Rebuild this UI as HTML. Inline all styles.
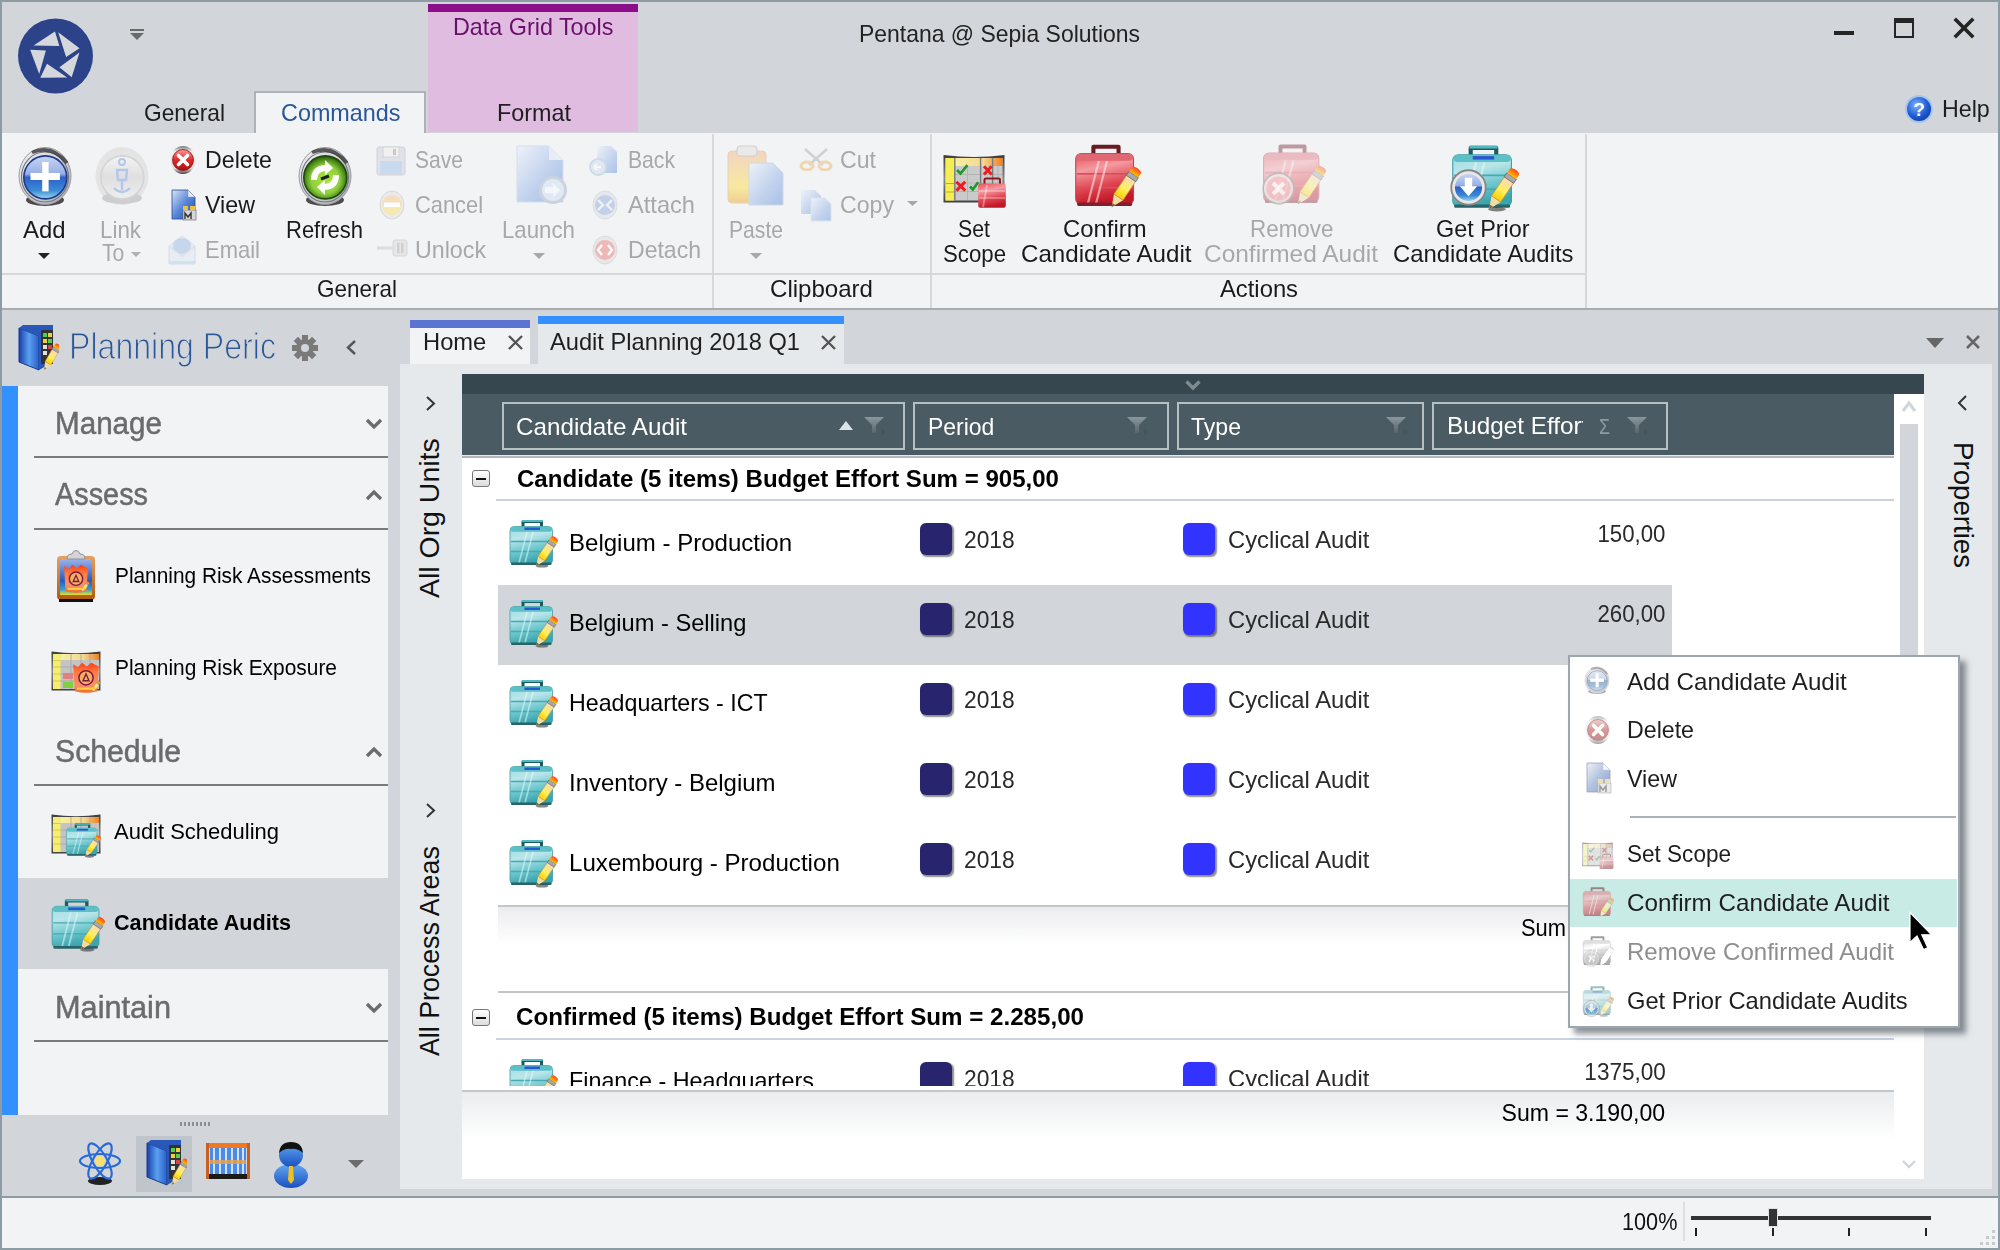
<!DOCTYPE html><html><head><meta charset="utf-8"><title>Pentana</title><style>
*{margin:0;padding:0;box-sizing:border-box}
html,body{width:2000px;height:1250px;overflow:hidden}
body{position:relative;background:#d2d6da;font-family:"Liberation Sans",sans-serif}
body>div,body>svg,.clip>div,.clip>svg{position:absolute}
.t{line-height:0;white-space:pre}
svg{overflow:visible}
.clip{overflow:hidden}
</style></head><body><svg style="left:0;top:0" width="0" height="0"><defs>
<linearGradient id="gTeal" x1="0" y1="0" x2="0.25" y2="1"><stop offset="0" stop-color="#9fdde2"/><stop offset="0.35" stop-color="#b9e6e9"/><stop offset="0.7" stop-color="#6cc5cc"/><stop offset="1" stop-color="#3aa5ad"/></linearGradient>
<linearGradient id="gRed" x1="0" y1="0" x2="0.25" y2="1"><stop offset="0" stop-color="#e8505a"/><stop offset="0.35" stop-color="#f49aa0"/><stop offset="0.7" stop-color="#e04450"/><stop offset="1" stop-color="#c01828"/></linearGradient>
<linearGradient id="gPen" x1="0" y1="1" x2="0" y2="0"><stop offset="0" stop-color="#ffd000"/><stop offset="0.45" stop-color="#fff060"/><stop offset="1" stop-color="#f8d8c0"/></linearGradient>
<linearGradient id="gEr" x1="0" y1="1" x2="0" y2="0"><stop offset="0" stop-color="#ffc000"/><stop offset="1" stop-color="#ff4020"/></linearGradient>
<linearGradient id="gBlueOrb" x1="0" y1="0" x2="0" y2="1"><stop offset="0" stop-color="#c6d4f2"/><stop offset="0.42" stop-color="#98b0e6"/><stop offset="0.5" stop-color="#2e5fc8"/><stop offset="0.8" stop-color="#3a8ad6"/><stop offset="1" stop-color="#9ad8ea"/></linearGradient>
<radialGradient id="gGreenOrb" cx="50%" cy="55%" r="55%"><stop offset="0" stop-color="#a8e830"/><stop offset="0.6" stop-color="#90d040"/><stop offset="0.85" stop-color="#4a8a18"/><stop offset="1" stop-color="#24500a"/></radialGradient>
<linearGradient id="gGrayOrb" x1="0" y1="0" x2="0" y2="1"><stop offset="0" stop-color="#f4f4f4"/><stop offset="0.5" stop-color="#dcdcdc"/><stop offset="1" stop-color="#eeeeee"/></linearGradient>
<linearGradient id="gSilver" x1="0" y1="0" x2="1" y2="1"><stop offset="0" stop-color="#f4f4f6"/><stop offset="0.5" stop-color="#d0d0d6"/><stop offset="1" stop-color="#a8a8b0"/></linearGradient>
<linearGradient id="gRing" x1="0" y1="0" x2="0" y2="1"><stop offset="0" stop-color="#7a7a7a"/><stop offset="0.2" stop-color="#f0f0f0"/><stop offset="0.8" stop-color="#e0e0e0"/><stop offset="1" stop-color="#404040"/></linearGradient>
<linearGradient id="gRedDisc" x1="0" y1="0" x2="0" y2="1"><stop offset="0" stop-color="#ff9a9a"/><stop offset="0.5" stop-color="#e02828"/><stop offset="1" stop-color="#b01010"/></linearGradient>
<linearGradient id="gDoc" x1="0" y1="0" x2="1" y2="1"><stop offset="0" stop-color="#d8e4f6"/><stop offset="0.5" stop-color="#5a88d8"/><stop offset="1" stop-color="#1a48b0"/></linearGradient>
<linearGradient id="gDocF" x1="0" y1="0" x2="1" y2="1"><stop offset="0" stop-color="#eef2fa"/><stop offset="0.6" stop-color="#b8ccec"/><stop offset="1" stop-color="#9cb8e4"/></linearGradient>
<linearGradient id="gClip" x1="0" y1="0" x2="0" y2="1"><stop offset="0" stop-color="#f4d0b8"/><stop offset="0.7" stop-color="#f8e890"/><stop offset="1" stop-color="#f0c880"/></linearGradient>
<linearGradient id="gOrange" x1="0" y1="0" x2="0" y2="1"><stop offset="0" stop-color="#ff5a20"/><stop offset="0.5" stop-color="#ff9050"/><stop offset="1" stop-color="#e04010"/></linearGradient>
<linearGradient id="gBook" x1="0" y1="0" x2="1" y2="0"><stop offset="0" stop-color="#1a3ea8"/><stop offset="0.5" stop-color="#5aa0f0"/><stop offset="1" stop-color="#2a60c8"/></linearGradient>
<linearGradient id="gPerson" x1="0" y1="0" x2="0" y2="1"><stop offset="0" stop-color="#60a8f0"/><stop offset="1" stop-color="#1a50c0"/></linearGradient>

<symbol id="pencil" viewBox="0 0 12 36"><g>
<polygon points="6,35 2,26 10,26" fill="#f4dca0"/><polygon points="6,35 4.7,32 7.3,32" fill="#806040"/>
<rect x="2" y="9" width="8" height="17" fill="url(#gPen)" stroke="#c89040" stroke-width="0.5"/>
<rect x="1.8" y="6" width="8.4" height="3.5" fill="#a8a8a8" stroke="#606060" stroke-width="0.5"/>
<path d="M2,6 L2,3 Q2,0.5 6,0.5 Q10,0.5 10,3 L10,6 Z" fill="url(#gEr)"/>
</g></symbol>

<symbol id="bcase" viewBox="0 0 50 50">
<path d="M13.5,10.5 V3.5 Q13.5,2 15,2 H33.5 Q35,2 35,3.5 V10.5 H32 V5 H16.5 V10.5 Z" fill="#1f5a5e"/>
<rect x="14" y="2" width="20.5" height="2" fill="#4fb8c0"/>
<rect x="2" y="8.5" width="42.5" height="37.5" rx="4" fill="url(#gTeal)" stroke="#3c9ea5" stroke-width="0.8"/>
<rect x="2.5" y="8.7" width="41.5" height="5" rx="2.5" fill="#5cc0c6"/>
<rect x="16.5" y="9.5" width="15.5" height="2.5" fill="#2a58d0"/>
<path d="M3,23.5 H44 M3,33.5 H44" stroke="#45aab2" stroke-width="1.3"/>
<path d="M19,14 L11,45 M25,14 L17,45" stroke="#e8f8f8" stroke-width="1.6" opacity="0.55"/>
<rect x="3" y="44.5" width="40.5" height="2.5" rx="1" fill="#2a6468"/>
<ellipse cx="34" cy="48" rx="6.5" ry="1.6" fill="#333" opacity="0.6"/>
<use href="#pencil" x="0" y="0" width="12" height="36" transform="translate(28.4,48) rotate(34) translate(-6,-35)"/>
</symbol>

<symbol id="bcaseRed" viewBox="0 0 50 50">
<path d="M13.5,10.5 V3.5 Q13.5,2 15,2 H33.5 Q35,2 35,3.5 V10.5 H32 V5 H16.5 V10.5 Z" fill="#6a1a20"/>
<rect x="2" y="8.5" width="42.5" height="37.5" rx="4" fill="url(#gRed)" stroke="#c04450" stroke-width="0.8"/>
<rect x="2.5" y="8.7" width="41.5" height="5" rx="2.5" fill="#e06872"/>
<path d="M3,23.5 H44 M3,33.5 H44" stroke="#d85060" stroke-width="1.3"/>
<path d="M19,14 L11,45 M25,14 L17,45" stroke="#fff0f0" stroke-width="1.6" opacity="0.55"/>
<rect x="3" y="44.5" width="40.5" height="2.5" rx="1" fill="#802028"/>
<use href="#pencil" x="0" y="0" width="12" height="36" transform="translate(28.4,48) rotate(34) translate(-6,-35)"/>
</symbol>

<symbol id="orbBase" viewBox="0 0 60 64">
<ellipse cx="30" cy="56" rx="19" ry="6" fill="#3a3a3a" opacity="0.9"/>
<ellipse cx="30" cy="32" rx="26" ry="28.5" fill="url(#gSilver)" stroke="#9a9aa2" stroke-width="1"/>
<ellipse cx="30" cy="33" rx="23.5" ry="25" fill="none" stroke="#77777f" stroke-width="1.2"/>
<path d="M17,8.5 Q37,0 52,19" stroke="#2a2a2a" stroke-width="3.5" fill="none" opacity="0.75"/>
</symbol>
<symbol id="orbAdd" viewBox="0 0 60 64">
<use href="#orbBase" width="60" height="64"/>
<circle cx="30.3" cy="33.4" r="21.5" fill="url(#gBlueOrb)" stroke="#1c3a88" stroke-width="1.6"/>
<rect x="27.2" y="18" width="6.4" height="29.4" fill="#fff"/><rect x="15.5" y="29" width="29.4" height="7" fill="#fff"/>
</symbol>
<symbol id="orbRefresh" viewBox="0 0 60 64">
<use href="#orbBase" width="60" height="64"/>
<circle cx="30.3" cy="33.4" r="21.5" fill="url(#gGreenOrb)" stroke="#1e4a08" stroke-width="1.6"/>
<path d="M16,36 Q16,22 30,21 L30,16 L38,24 L30,31 L30,27 Q22,28 22,36 Z" fill="#fff"/>
<path d="M44,31 Q44,45 30,46 L30,51 L22,43 L30,36 L30,40 Q38,39 38,31 Z" fill="#fff"/>
<path d="M26,35 L34,32" stroke="#222" stroke-width="3"/>
</symbol>
<symbol id="orbLink" viewBox="0 0 60 64">
<ellipse cx="30" cy="32" rx="26.5" ry="29" fill="#e2e2e2"/>
<ellipse cx="30" cy="54" rx="20" ry="6" fill="#c8c8c8"/>
<circle cx="30.3" cy="33.4" r="21.5" fill="url(#gGrayOrb)" stroke="#cfcfcf" stroke-width="1.6"/>
<circle cx="30" cy="18" r="3" fill="none" stroke="#a8c0e8" stroke-width="2"/>
<path d="M25,26 H35 L34,36 H26 Z M30,36 V46 M22,44 Q30,52 38,44" stroke="#a8c0e8" stroke-width="2.4" fill="none"/>
</symbol>

<symbol id="del" viewBox="0 0 26 30">
<ellipse cx="13" cy="15" rx="12.5" ry="14" fill="url(#gRing)"/>
<circle cx="13" cy="15" r="10.5" fill="url(#gRedDisc)" stroke="#8a1010" stroke-width="0.8"/>
<path d="M8.5,10.5 L17.5,19.5 M17.5,10.5 L8.5,19.5" stroke="#fff" stroke-width="3.6" stroke-linecap="round"/>
</symbol>
<symbol id="view" viewBox="0 0 28 32">
<path d="M2,1 H18 L25,8 V30 H2 Z" fill="url(#gDoc)" stroke="#2a4a98" stroke-width="0.8"/>
<path d="M18,1 V8 H25" fill="#e8eef8" stroke="#8aa0c8" stroke-width="0.6"/>
<rect x="13" y="21" width="13" height="10" fill="#d8d8d8" stroke="#606060" stroke-width="0.6"/>
<rect x="13" y="17" width="5" height="4" fill="#f0c040"/><rect x="20" y="17" width="5" height="4" fill="#f0c040"/>
<path d="M15,30 V24 L18,28 L21,24 V30" stroke="#333" stroke-width="1.4" fill="none"/>
</symbol>
<symbol id="email" viewBox="0 0 30 32">
<path d="M2,12 L15,2 L28,12 V30 H2 Z" fill="#e6ecf4" stroke="#d0d8e4" stroke-width="1"/>
<ellipse cx="15" cy="12" rx="9" ry="8" fill="#bcd0ec"/>
<path d="M2,12 L15,22 L28,12" stroke="#d4dce8" stroke-width="1.5" fill="none"/>
<rect x="2" y="27" width="26" height="3" fill="#c4e0f0"/>
</symbol>
<symbol id="save" viewBox="0 0 32 32">
<rect x="2" y="2" width="28" height="28" rx="2" fill="#d8dce4" stroke="#c0c4cc"/>
<rect x="8" y="2" width="16" height="10" fill="#f0f0f0" stroke="#c8c8c8"/><rect x="18" y="4" width="3" height="6" fill="#b8b8b8"/>
<rect x="5" y="16" width="22" height="13" fill="#b8d0ee"/>
</symbol>
<symbol id="cancel" viewBox="0 0 28 32">
<ellipse cx="14" cy="16" rx="12" ry="14" fill="#e8e8e8" stroke="#d0d0d0"/>
<circle cx="14" cy="16" r="10" fill="#f8d8b0"/><path d="M4,16 A10,10 0 0 0 24,16 Z" fill="#f8e8a0"/>
<rect x="6" y="13.5" width="16" height="4.5" fill="#fff"/>
</symbol>
<symbol id="unlock" viewBox="0 0 34 22">
<path d="M2,11 H18" stroke="#d8d8d8" stroke-width="3"/><rect x="18" y="3" width="14" height="16" rx="2" fill="#e4e4e4" stroke="#d0d0d0"/>
<rect x="22" y="6" width="2.5" height="10" fill="#c8c8c8"/><rect x="26" y="6" width="2.5" height="10" fill="#c8c8c8"/>
</symbol>
<symbol id="launch" viewBox="0 0 52 62">
<path d="M2,2 H34 L48,16 V58 H2 Z" fill="url(#gDocF)" stroke="#d0dcec" stroke-width="1"/>
<path d="M34,2 V16 H48" fill="#e8ecf4"/>
<circle cx="38" cy="46" r="12.5" fill="#dfe8f4" stroke="#c8d0dc" stroke-width="3"/>
<path d="M30,43 H38 V39 L45,46 L38,53 V49 H30 Z" fill="#f4f8fc"/>
</symbol>
<symbol id="back" viewBox="0 0 30 32">
<path d="M8,1 H22 L28,7 V28 H8 Z" fill="url(#gDocF)"/>
<circle cx="9" cy="22" r="8" fill="#dce6f4" stroke="#c8d4e4" stroke-width="2"/>
<path d="M5,22 H12 M5,22 L8,19 M5,22 L8,25" stroke="#f8fafc" stroke-width="2"/>
</symbol>
<symbol id="attach" viewBox="0 0 28 32">
<ellipse cx="14" cy="16" rx="12" ry="14" fill="#e4e6ea" stroke="#d4d6da"/>
<circle cx="14" cy="16" r="10" fill="#b8c8e8"/>
<path d="M7,11 L12,16 L7,21 M21,11 L16,16 L21,21" stroke="#eef2f8" stroke-width="2.4" fill="none"/>
</symbol>
<symbol id="detach" viewBox="0 0 28 32">
<ellipse cx="14" cy="16" rx="12" ry="14" fill="#e6e4e4" stroke="#d8d4d4"/>
<circle cx="14" cy="16" r="10" fill="#eeaaaa"/>
<path d="M11,11 L7,16 L11,21 M17,11 L21,16 L17,21" stroke="#fff" stroke-width="2.4" fill="none"/>
</symbol>
<symbol id="paste" viewBox="0 0 60 64">
<rect x="3" y="8" width="38" height="52" rx="4" fill="url(#gClip)" stroke="#e8c8b0"/>
<rect x="12" y="3" width="20" height="10" rx="3" fill="#e8e8e8" stroke="#c8c8c8"/>
<path d="M24,20 H48 L58,30 V62 H24 Z" fill="url(#gDocF)" stroke="#c8d4e8"/>
</symbol>
<symbol id="cut" viewBox="0 0 34 24">
<path d="M6,2 L24,18 M28,2 L10,18" stroke="#c8c8c8" stroke-width="2.5"/>
<ellipse cx="8" cy="19" rx="6" ry="4" fill="none" stroke="#eed0a0" stroke-width="3"/>
<ellipse cx="26" cy="19" rx="6" ry="4" fill="none" stroke="#eed0a0" stroke-width="3"/>
</symbol>
<symbol id="copy" viewBox="0 0 34 34">
<path d="M2,2 H16 L22,8 V26 H2 Z" fill="url(#gDocF)"/>
<path d="M12,10 H26 L32,16 V33 H12 Z" fill="url(#gDocF)" stroke="#d8e0ec"/>
</symbol>
<symbol id="scope" viewBox="0 0 64 56">
<linearGradient id="gFrame" x1="0" y1="0" x2="0" y2="1"><stop offset="0" stop-color="#3c3c3c"/><stop offset="0.5" stop-color="#8a8a8a"/><stop offset="1" stop-color="#404040"/></linearGradient>
<linearGradient id="gHdr" x1="0" y1="0" x2="1" y2="0"><stop offset="0" stop-color="#f8f0a0"/><stop offset="0.6" stop-color="#f4d890"/><stop offset="1" stop-color="#f08020"/></linearGradient>
<path d="M0.5,3 Q31,7 61.5,3 V50.5 H0.5 Z" fill="url(#gFrame)"/>
<rect x="2.5" y="6" width="57" height="42.5" fill="#cacaca"/>
<rect x="2.5" y="6" width="8.5" height="42.5" fill="#f4ee50"/>
<rect x="11" y="6" width="48.5" height="8" fill="url(#gHdr)"/>
<path d="M24.5,14 V48 M11,22.5 H59 M11,31 H59 M11,39.5 H59 M55,14 V48" stroke="#b4b4b4" stroke-width="1"/>
<path d="M11.8,6 V48 M37.6,6 V48 M49.6,6 V48" stroke="#7a7a7a" stroke-width="1.4"/>
<path d="M3,31.5 H11 M3,40 H11" stroke="#b8b020" stroke-width="1"/>
<path d="M14,18 L17.5,21.5 L24.4,13.2" stroke="#1a9a2a" stroke-width="2.6" fill="none"/>
<path d="M27,34.5 L29.8,37.5 L35.2,30.2" stroke="#1a9a2a" stroke-width="2.6" fill="none"/>
<path d="M41,14.2 L48.6,22.4 M48.6,14.2 L41,22.4" stroke="#ee1c1c" stroke-width="3"/>
<path d="M13.4,29.8 L22.2,38.6 M22.2,29.8 L13.4,38.6" stroke="#ee1c1c" stroke-width="3"/>
<path d="M41.5,32.5 V27.5 Q41.5,26.4 43,26.4 H55.5 Q57,26.4 57,27.5 V32.5" stroke="#901820" stroke-width="2" fill="none"/>
<rect x="35.2" y="31.5" width="27.6" height="24.3" rx="2" fill="url(#gRed)"/>
<path d="M36,39 H62 M36,46 H62" stroke="#fff" stroke-width="1.2" opacity="0.55"/>
<path d="M44,33 L40,55" stroke="#fff" stroke-width="2" opacity="0.35"/>
</symbol>
<symbol id="downOrb" viewBox="0 0 30 30">
<circle cx="15" cy="15" r="14" fill="#e8e8e8" stroke="#888" stroke-width="1.5"/>
<circle cx="15" cy="15" r="11" fill="url(#gBlueOrb)"/>
<path d="M12,7 H18 V14 H22 L15,22 L8,14 H12 Z" fill="#fff"/>
</symbol>
<symbol id="xOrb" viewBox="0 0 30 30">
<circle cx="15" cy="15" r="14" fill="#eee" stroke="#bbb" stroke-width="1.5"/>
<circle cx="15" cy="15" r="11" fill="#f4c8cc"/>
<path d="M10,10 L20,20 M20,10 L10,20" stroke="#fff" stroke-width="3.6"/>
</symbol>
<symbol id="book" viewBox="0 0 42 48">
<path d="M2,4 L22,12 L22,46 L2,38 Z" fill="url(#gBook)" stroke="#163a90" stroke-width="1"/>
<path d="M2,4 L6,1 H36 L36,38 L22,46 L22,12 Z" fill="#2a58b8"/>
<rect x="24" y="6" width="12" height="34" fill="#333"/>
<rect x="26" y="9" width="4" height="4" fill="#50d050"/><rect x="31" y="9" width="4" height="4" fill="#f0d040"/>
<rect x="26" y="15" width="4" height="4" fill="#f0d040"/><rect x="31" y="15" width="4" height="4" fill="#50d050"/>
<rect x="26" y="21" width="4" height="4" fill="#e0e0e0"/><rect x="31" y="21" width="4" height="4" fill="#e04040"/>
<rect x="26" y="27" width="4" height="4" fill="#e0e0e0"/>
<use href="#pencil" width="12" height="36" transform="translate(27,46) rotate(30) translate(-5,-30) scale(0.85)"/>
</symbol>
<symbol id="bagOrange" viewBox="0 0 40 44">
<linearGradient id="gBag" x1="0" y1="0" x2="0" y2="1"><stop offset="0" stop-color="#ff3a10"/><stop offset="0.3" stop-color="#ff7a40"/><stop offset="0.75" stop-color="#f8906a"/><stop offset="1" stop-color="#f06a20"/></linearGradient>
<path d="M3,5 L9,9 L15,3 L21,8 L27,3 L37,8 L35,41 Q20,45 5,41 Z" fill="url(#gBag)"/>
<circle cx="20" cy="23" r="9.5" fill="#f4b060" stroke="#7a1a40" stroke-width="2"/>
<path d="M16,27 L20,18 L24,27 Z" fill="none" stroke="#7a1a40" stroke-width="1.8"/>
<rect x="8" y="36" width="24" height="3" fill="#ffe040" opacity="0.8"/>
<use href="#pencil" width="12" height="36" transform="translate(28,42) rotate(35) translate(-3,-18) scale(0.5)"/>
</symbol>
<symbol id="pra" viewBox="0 0 40 52">
<linearGradient id="gClipB" x1="0" y1="0" x2="0" y2="1"><stop offset="0" stop-color="#e8a060"/><stop offset="1" stop-color="#b05a10"/></linearGradient>
<linearGradient id="gPaper" x1="0" y1="0" x2="0" y2="1"><stop offset="0" stop-color="#9ab4e8"/><stop offset="0.6" stop-color="#2a58c0"/><stop offset="0.85" stop-color="#30a0e0"/><stop offset="1" stop-color="#f0e020"/></linearGradient>
<rect x="1" y="6" width="38" height="44" rx="4" fill="url(#gClipB)"/>
<rect x="4" y="9" width="32" height="36" rx="1" fill="url(#gPaper)"/>
<path d="M11,9 Q11,4 16,4 Q17,0.5 20,0.5 Q23,0.5 24,4 Q29,4 29,9 Z" fill="#d4d4d8" stroke="#909098" stroke-width="1"/>
<use href="#bagOrange" x="6" y="12" width="28" height="32"/>
<rect x="3" y="49" width="34" height="3" fill="#111"/>
</symbol>
<symbol id="gridIcon" viewBox="0 0 50 46">
<path d="M0.5,2.5 Q25,6 49.5,2.5 V41.5 H0.5 Z" fill="url(#gFrame)"/>
<rect x="2" y="5" width="46" height="35" fill="#c4c4c4"/>
<rect x="2" y="5" width="7.5" height="35" fill="#f6ee70"/>
<rect x="9.5" y="5" width="38.5" height="6" fill="url(#gHdr)"/>
<path d="M9.5,18 H48 M9.5,25 H48 M9.5,32 H48 M20,5 V40 M30,5 V40 M39,5 V40" stroke="#a8a8a8" stroke-width="0.9"/>
<path d="M2,11.5 H9.5 M2,18 H9.5 M2,25 H9.5 M2,32 H9.5" stroke="#d0c840" stroke-width="0.9"/>
</symbol>
<symbol id="pre" viewBox="0 0 50 46">
<use href="#gridIcon" width="50" height="46"/>
<rect x="12" y="24" width="10" height="6" fill="#e08080"/><rect x="12" y="33" width="10" height="6" fill="#80d040"/>
<use href="#bagOrange" x="20" y="10" width="30" height="36"/>
</symbol>
<symbol id="asched" viewBox="0 0 50 46">
<use href="#gridIcon" width="50" height="46"/>
<use href="#bcase" x="14" y="10" width="36" height="36"/>
</symbol>
<symbol id="atom" viewBox="0 0 44 46">
<ellipse cx="22" cy="40" rx="12" ry="4" fill="#222"/>
<g fill="none" stroke="#2a6ad8" stroke-width="2.2"><ellipse cx="22" cy="20" rx="20" ry="7"/><ellipse cx="22" cy="20" rx="20" ry="7" transform="rotate(60 22 20)"/><ellipse cx="22" cy="20" rx="20" ry="7" transform="rotate(120 22 20)"/></g>
<circle cx="22" cy="20" r="5" fill="#f8e070"/>
</symbol>
<symbol id="abacus" viewBox="0 0 46 40">
<rect x="1" y="2" width="44" height="5" fill="#f07820"/><rect x="1" y="33" width="44" height="5" fill="#1a1a1a"/>
<rect x="1" y="2" width="3" height="36" fill="#c86020"/><rect x="42" y="2" width="3" height="36" fill="#c86020"/>
<rect x="5" y="7" width="36" height="26" fill="#4a8ae8"/>
<path d="M9,7 V33 M15,7 V33 M21,7 V33 M27,7 V33 M33,7 V33 M38,7 V33" stroke="#fff" stroke-width="1.5"/>
<rect x="5" y="19" width="36" height="4" fill="#f0a040" opacity="0.8"/>
</symbol>
<symbol id="person" viewBox="0 0 38 48">
<ellipse cx="19" cy="36" rx="17" ry="12" fill="url(#gPerson)"/>
<circle cx="19" cy="15" r="12" fill="url(#gPerson)"/>
<path d="M7,13 Q8,2 19,2 Q30,2 31,13 Q25,8 19,9 Q13,8 7,13 Z" fill="#111"/>
<path d="M17,26 H21 L22,40 L19,44 L16,40 Z" fill="#f0c020"/>
</symbol>
</defs></svg>
<svg style="left:18px;top:18px;" width="75" height="76" viewBox="0 0 75 76"><circle cx="37.5" cy="38" r="37.5" fill="#2c4389"/><polygon points="15.6,27.4 36.9,13.4 41.4,27.9" fill="#d4d8dc"/><polygon points="40.2,14.2 61.5,30.2 48.1,39.1" fill="#d4d8dc"/><polygon points="61.5,34.6 53.7,59.3 41.4,49.2" fill="#d4d8dc"/><polygon points="22.3,59.8 29.0,45.8 49.2,59.6" fill="#d4d8dc"/><polygon points="12.2,31.8 27.9,32.4 21.2,55.9" fill="#d4d8dc"/></svg>
<div style="left:130px;top:29px;width:14px;height:2px;background:#6a6a6a"></div>
<svg style="left:130px;top:33px;" width="14" height="8" viewBox="0 0 14 8"><polygon points="0,0 14,0 7,7" fill="#6a6a6a"/></svg>
<div style="left:428px;top:4px;width:210px;height:128px;background:#e0bde0"></div>
<div style="left:428px;top:4px;width:210px;height:8px;background:#8b0f8b"></div>
<div class="t" style="left:452.6px;top:26.7px;font-size:24px;color:#6b0e6b;transform:scaleX(0.9723);transform-origin:left center;">Data Grid Tools</div>
<div class="t" style="left:859.2px;top:34.4px;font-size:24px;color:#222;transform:scaleX(0.9561);transform-origin:left center;">Pentana @ Sepia Solutions</div>
<div class="t" style="left:144px;top:112.7px;font-size:24px;color:#1e1e1e;transform:scaleX(0.9486);transform-origin:left center;">General</div>
<div style="left:254px;top:91px;width:172px;height:43px;background:#f2f3f5;border:2px solid #aeb2b6;border-bottom:none"></div>
<div class="t" style="left:280.5px;top:112.7px;font-size:24px;color:#2a5699;transform:scaleX(0.9738);transform-origin:left center;">Commands</div>
<div class="t" style="left:497px;top:112.7px;font-size:24px;color:#1e1e1e;transform:scaleX(0.9735);transform-origin:left center;">Format</div>
<div style="left:1834px;top:31px;width:20px;height:4px;background:#252525"></div>
<div style="left:1894px;top:18px;width:20px;height:20px;border:2px solid #252525;border-top:5px solid #252525"></div>
<svg style="left:1954px;top:18px;" width="20" height="20" viewBox="0 0 20 20"><path d="M2,2 L18,18 M18,2 L2,18" stroke="#252525" stroke-width="3.6" stroke-linecap="square"/></svg>
<svg style="left:1905px;top:95px;" width="28" height="28" viewBox="0 0 28 28"><defs><radialGradient id="hg" cx="40%" cy="35%" r="70%"><stop offset="0" stop-color="#7fb2ff"/><stop offset="0.6" stop-color="#1f5fd6"/><stop offset="1" stop-color="#0b3aa0"/></radialGradient></defs><circle cx="14" cy="14" r="13" fill="url(#hg)" stroke="#a9c4ea" stroke-width="2"/><text x="14" y="21" font-family="Liberation Sans" font-weight="700" font-size="19" fill="#fff" text-anchor="middle">?</text></svg>
<div class="t" style="left:1942px;top:108.7px;font-size:24px;color:#1e1e1e;transform:scaleX(0.9684);transform-origin:left center;">Help</div>
<div style="left:2px;top:133px;width:1996px;height:176px;background:#f2f3f5"></div>
<div style="left:2px;top:308px;width:1996px;height:2px;background:#a9acaf"></div>
<div style="left:2px;top:273px;width:1583px;height:2px;background:#d5d9dc"></div>
<div style="left:712px;top:134px;width:2px;height:174px;background:#d5d9dc"></div>
<div style="left:930px;top:134px;width:2px;height:174px;background:#d5d9dc"></div>
<div style="left:1585px;top:134px;width:2px;height:174px;background:#d5d9dc"></div>
<div class="t" style="left:22.5px;top:229.7px;font-size:24px;color:#1a1a1a;transform:scaleX(0.9952);transform-origin:left center;">Add</div>
<svg style="left:38px;top:253px;" width="12" height="6" viewBox="0 0 12 6"><polygon points="0,0 12,0 6.0,6" fill="#222"/></svg>
<div class="t" style="left:100px;top:229.7px;font-size:24px;color:#a8a8a8;transform:scaleX(0.9312);transform-origin:left center;">Link</div>
<div class="t" style="left:101.7px;top:253.2px;font-size:24px;color:#a8a8a8;transform:scaleX(0.8794);transform-origin:left center;">To</div>
<svg style="left:131px;top:252px;" width="10" height="5" viewBox="0 0 10 5"><polygon points="0,0 10,0 5.0,5" fill="#b0b0b0"/></svg>
<div class="t" style="left:205px;top:159.7px;font-size:24px;color:#1a1a1a;transform:scaleX(0.9658);transform-origin:left center;">Delete</div>
<div class="t" style="left:205px;top:204.7px;font-size:24px;color:#1a1a1a;transform:scaleX(0.9691);transform-origin:left center;">View</div>
<div class="t" style="left:205px;top:249.7px;font-size:24px;color:#a8a8a8;transform:scaleX(0.9164);transform-origin:left center;">Email</div>
<div class="t" style="left:286px;top:229.7px;font-size:24px;color:#1a1a1a;transform:scaleX(0.9162);transform-origin:left center;">Refresh</div>
<div class="t" style="left:415px;top:159.7px;font-size:24px;color:#a8a8a8;transform:scaleX(0.8775);transform-origin:left center;">Save</div>
<div class="t" style="left:415px;top:204.7px;font-size:24px;color:#a8a8a8;transform:scaleX(0.9101);transform-origin:left center;">Cancel</div>
<div class="t" style="left:415px;top:249.7px;font-size:24px;color:#a8a8a8;transform:scaleX(0.9678);transform-origin:left center;">Unlock</div>
<div class="t" style="left:502px;top:229.7px;font-size:24px;color:#a8a8a8;transform:scaleX(0.9270);transform-origin:left center;">Launch</div>
<svg style="left:533px;top:253px;" width="12" height="6" viewBox="0 0 12 6"><polygon points="0,0 12,0 6.0,6" fill="#a8a8a8"/></svg>
<div class="t" style="left:628px;top:159.7px;font-size:24px;color:#a8a8a8;transform:scaleX(0.8808);transform-origin:left center;">Back</div>
<div class="t" style="left:628px;top:204.7px;font-size:24px;color:#a8a8a8;transform:scaleX(0.9846);transform-origin:left center;">Attach</div>
<div class="t" style="left:628px;top:249.7px;font-size:24px;color:#a8a8a8;transform:scaleX(0.9599);transform-origin:left center;">Detach</div>
<div class="t" style="left:729px;top:229.7px;font-size:24px;color:#a8a8a8;transform:scaleX(0.8798);transform-origin:left center;">Paste</div>
<svg style="left:750px;top:253px;" width="12" height="6" viewBox="0 0 12 6"><polygon points="0,0 12,0 6.0,6" fill="#a8a8a8"/></svg>
<div class="t" style="left:840px;top:159.7px;font-size:24px;color:#a8a8a8;transform:scaleX(0.9636);transform-origin:left center;">Cut</div>
<div class="t" style="left:840px;top:204.7px;font-size:24px;color:#a8a8a8;transform:scaleX(0.9637);transform-origin:left center;">Copy</div>
<svg style="left:907px;top:201px;" width="11" height="5" viewBox="0 0 11 5"><polygon points="0,0 11,0 5.5,5" fill="#a8a8a8"/></svg>
<div class="t" style="left:958px;top:228.7px;font-size:24px;color:#1a1a1a;transform:scaleX(0.8881);transform-origin:left center;">Set</div>
<div class="t" style="left:943px;top:253.7px;font-size:24px;color:#1a1a1a;transform:scaleX(0.9256);transform-origin:left center;">Scope</div>
<div class="t" style="left:1063px;top:228.7px;font-size:24px;color:#1a1a1a;transform:scaleX(0.9939);transform-origin:left center;">Confirm</div>
<div class="t" style="left:1020.5px;top:253.7px;font-size:24px;color:#1a1a1a;transform:scaleX(1.0061);transform-origin:left center;">Candidate Audit</div>
<div class="t" style="left:1250px;top:228.7px;font-size:24px;color:#a8a8a8;transform:scaleX(0.9343);transform-origin:left center;">Remove</div>
<div class="t" style="left:1204px;top:253.7px;font-size:24px;color:#a8a8a8;transform:scaleX(1.0189);transform-origin:left center;">Confirmed Audit</div>
<div class="t" style="left:1436px;top:228.7px;font-size:24px;color:#1a1a1a;transform:scaleX(0.9747);transform-origin:left center;">Get Prior</div>
<div class="t" style="left:1392.5px;top:253.7px;font-size:24px;color:#1a1a1a;transform:scaleX(0.9947);transform-origin:left center;">Candidate Audits</div>
<div class="t" style="left:316.8px;top:288.7px;font-size:24px;color:#1a1a1a;transform:scaleX(0.9369);transform-origin:left center;">General</div>
<div class="t" style="left:770px;top:288.7px;font-size:24px;color:#1a1a1a;transform:scaleX(1.0026);transform-origin:left center;">Clipboard</div>
<div class="t" style="left:1220px;top:288.7px;font-size:24px;color:#1a1a1a;transform:scaleX(0.9911);transform-origin:left center;">Actions</div>
<div class="t" style="left:69px;top:347.1px;font-size:36px;color:#2b579a;transform:scaleX(0.8917);transform-origin:left center;-webkit-text-stroke:1.1px #d2d6da;">Planning Peric</div>
<svg style="left:292px;top:335px;" width="26" height="26" viewBox="0 0 26 26"><g transform="translate(13,13)" fill="#7a7a7a"><rect x="-3" y="-13" width="6" height="7" transform="rotate(0)"/><rect x="-3" y="-13" width="6" height="7" transform="rotate(45)"/><rect x="-3" y="-13" width="6" height="7" transform="rotate(90)"/><rect x="-3" y="-13" width="6" height="7" transform="rotate(135)"/><rect x="-3" y="-13" width="6" height="7" transform="rotate(180)"/><rect x="-3" y="-13" width="6" height="7" transform="rotate(225)"/><rect x="-3" y="-13" width="6" height="7" transform="rotate(270)"/><rect x="-3" y="-13" width="6" height="7" transform="rotate(315)"/><circle r="9"/><circle r="4" fill="#d2d6da"/></g></svg>
<svg style="left:345px;top:340px;" width="12" height="15" viewBox="0 0 12 15"><path d="M10,1 L3,7.5 L10,14" stroke="#555" stroke-width="2.4" fill="none"/></svg>
<div style="left:2px;top:386px;width:16px;height:729px;background:#3390ff"></div>
<div style="left:18px;top:386px;width:370px;height:729px;background:#f2f3f5"></div>
<div class="t" style="left:55px;top:424.3px;font-size:31px;color:#6b6b6b;transform:scaleX(0.9551);transform-origin:left center;-webkit-text-stroke:0.5px #6b6b6b;">Manage</div>
<svg style="left:366px;top:419px;" width="16" height="10" viewBox="0 0 16 10"><path d="M1,1 L8,8 L15,1" stroke="#6b6b6b" stroke-width="3.2" fill="none"/></svg>
<div style="left:34px;top:456px;width:354px;height:2px;background:#7a7a7a"></div>
<div class="t" style="left:55px;top:495.3px;font-size:31px;color:#6b6b6b;transform:scaleX(0.9307);transform-origin:left center;-webkit-text-stroke:0.5px #6b6b6b;">Assess</div>
<svg style="left:366px;top:490px;" width="16" height="10" viewBox="0 0 16 10"><path d="M1,9 L8,2 L15,9" stroke="#6b6b6b" stroke-width="3.2" fill="none"/></svg>
<div style="left:34px;top:528px;width:354px;height:2px;background:#7a7a7a"></div>
<div class="t" style="left:115px;top:576.4px;font-size:22px;color:#000;transform:scaleX(0.9473);transform-origin:left center;">Planning Risk Assessments</div>
<div class="t" style="left:115px;top:668.4px;font-size:22px;color:#000;transform:scaleX(0.9504);transform-origin:left center;">Planning Risk Exposure</div>
<div class="t" style="left:55px;top:752.3px;font-size:31px;color:#6b6b6b;transform:scaleX(0.9746);transform-origin:left center;-webkit-text-stroke:0.5px #6b6b6b;">Schedule</div>
<svg style="left:366px;top:747px;" width="16" height="10" viewBox="0 0 16 10"><path d="M1,9 L8,2 L15,9" stroke="#6b6b6b" stroke-width="3.2" fill="none"/></svg>
<div style="left:34px;top:784px;width:354px;height:2px;background:#7a7a7a"></div>
<div class="t" style="left:114px;top:831.7px;font-size:22px;color:#000;transform:scaleX(0.9992);transform-origin:left center;">Audit Scheduling</div>
<div style="left:18px;top:878px;width:370px;height:91px;background:#d2d6da"></div>
<div class="t" style="left:114px;top:923.4px;font-size:22px;color:#000;font-weight:700;transform:scaleX(0.9828);transform-origin:left center;">Candidate Audits</div>
<div class="t" style="left:55px;top:1007.8px;font-size:31px;color:#6b6b6b;transform:scaleX(0.9899);transform-origin:left center;-webkit-text-stroke:0.5px #6b6b6b;">Maintain</div>
<svg style="left:366px;top:1003px;" width="16" height="10" viewBox="0 0 16 10"><path d="M1,1 L8,8 L15,1" stroke="#6b6b6b" stroke-width="3.2" fill="none"/></svg>
<div style="left:34px;top:1040px;width:354px;height:2px;background:#7a7a7a"></div>
<svg style="left:180px;top:1122px;" width="30" height="4" viewBox="0 0 30 4"><rect x="0" y="0" width="2" height="4" fill="#8a8f94"/><rect x="4" y="0" width="2" height="4" fill="#8a8f94"/><rect x="8" y="0" width="2" height="4" fill="#8a8f94"/><rect x="12" y="0" width="2" height="4" fill="#8a8f94"/><rect x="16" y="0" width="2" height="4" fill="#8a8f94"/><rect x="20" y="0" width="2" height="4" fill="#8a8f94"/><rect x="24" y="0" width="2" height="4" fill="#8a8f94"/><rect x="28" y="0" width="2" height="4" fill="#8a8f94"/></svg>
<div style="left:136px;top:1136px;width:56px;height:56px;background:#bfc5ca"></div>
<svg style="left:348px;top:1160px;" width="16" height="8" viewBox="0 0 16 8"><polygon points="0,0 16,0 8.0,8" fill="#6b6b6b"/></svg>
<div style="left:400px;top:364px;width:1592px;height:825px;background:#e6e9ec"></div>
<div style="left:410px;top:320px;width:120px;height:8px;background:#5b73d1"></div>
<div style="left:410px;top:328px;width:120px;height:36px;background:#f2f3f5"></div>
<div class="t" style="left:422.5px;top:341.9px;font-size:24px;color:#1e1e1e;transform:scaleX(0.9886);transform-origin:left center;">Home</div>
<svg style="left:507.5px;top:335px;" width="15" height="15" viewBox="0 0 15 15"><path d="M1,1 L14,14 M14,1 L1,14" stroke="#555" stroke-width="2.4"/></svg>
<div style="left:538px;top:316px;width:306px;height:8px;background:#3390ff"></div>
<div style="left:538px;top:324px;width:306px;height:40px;background:#e6e9ec"></div>
<div class="t" style="left:550px;top:341.9px;font-size:24px;color:#1e1e1e;transform:scaleX(0.9861);transform-origin:left center;">Audit Planning 2018 Q1</div>
<svg style="left:821px;top:335px;" width="15" height="15" viewBox="0 0 15 15"><path d="M1,1 L14,14 M14,1 L1,14" stroke="#555" stroke-width="2.4"/></svg>
<svg style="left:1926px;top:338px;" width="18" height="10" viewBox="0 0 18 10"><polygon points="0,0 18,0 9.0,10" fill="#666"/></svg>
<svg style="left:1966px;top:335px;" width="14" height="14" viewBox="0 0 14 14"><path d="M1,1 L13,13 M13,1 L1,13" stroke="#666" stroke-width="2.6"/></svg>
<svg style="left:426px;top:396px;" width="10" height="15" viewBox="0 0 10 15"><path d="M1,1 L8,7.5 L1,14" stroke="#333" stroke-width="2" fill="none"/></svg>
<svg style="left:426px;top:803px;" width="10" height="15" viewBox="0 0 10 15"><path d="M1,1 L8,7.5 L1,14" stroke="#333" stroke-width="2" fill="none"/></svg>
<div class="t" style="left:429.5px;top:598px;font-size:28px;color:#111;transform:rotate(-90deg) scaleX(1.016);transform-origin:0 0;line-height:0">All Org Units</div>
<div class="t" style="left:429.5px;top:1055.5px;font-size:28px;color:#111;transform:rotate(-90deg) scaleX(0.956);transform-origin:0 0;line-height:0">All Process Areas</div>
<svg style="left:1957px;top:395px;" width="10" height="16" viewBox="0 0 10 16"><path d="M9,1 L2,8 L9,15" stroke="#333" stroke-width="2" fill="none"/></svg>
<div class="t" style="left:1963px;top:441.6px;font-size:28px;color:#111;transform:rotate(90deg) scaleX(0.987);transform-origin:0 0;line-height:0">Properties</div>
<div style="left:462px;top:374px;width:1462px;height:20px;background:#37474f"></div>
<svg style="left:1185px;top:380px;" width="16" height="10" viewBox="0 0 16 10"><path d="M1.5,1.5 L8,8 L14.5,1.5" stroke="#7d8b91" stroke-width="3.4" fill="none"/></svg>
<div style="left:462px;top:394px;width:1432px;height:61px;background:#4a5b63"></div>
<div style="left:462px;top:455.5px;width:1432px;height:2.5px;background:#b0b6b9"></div>
<div style="left:462px;top:458px;width:1462px;height:721px;background:#fff"></div>
<div style="left:1894px;top:394px;width:30px;height:64px;background:#fff"></div>
<svg style="left:1902px;top:400px;" width="14" height="12" viewBox="0 0 14 12"><path d="M1,11 L7,3 L13,11" stroke="#cfd5da" stroke-width="3" fill="none"/></svg>
<div style="left:1900px;top:424px;width:18px;height:576px;background:#d2d6da"></div>
<svg style="left:1902px;top:1160px;" width="14" height="8" viewBox="0 0 14 8"><path d="M1,1 L7,7 L13,1" stroke="#cfd5da" stroke-width="2.4" fill="none"/></svg>
<div style="left:502px;top:402px;width:403px;height:48px;border:2px solid #b5c0c4"></div>
<div style="left:913px;top:402px;width:256px;height:48px;border:2px solid #b5c0c4"></div>
<div style="left:1177px;top:402px;width:247px;height:48px;border:2px solid #b5c0c4"></div>
<div style="left:1432px;top:402px;width:236px;height:48px;border:2px solid #b5c0c4"></div>
<div class="t" style="left:516px;top:426.7px;font-size:24px;color:#fff;transform:scaleX(1.0090);transform-origin:left center;">Candidate Audit</div>
<div class="t" style="left:927.5px;top:427.2px;font-size:24px;color:#fff;transform:scaleX(0.9557);transform-origin:left center;">Period</div>
<div class="t" style="left:1191px;top:426.7px;font-size:24px;color:#fff;transform:scaleX(0.9610);transform-origin:left center;">Type</div>
<div class="clip" style="left:1446px;top:410px;width:136.5px;height:36px"><div class="t" style="left:1px;top:15.7px;font-size:24px;color:#fff;transform:scaleX(1.012);transform-origin:left center">Budget Effort</div></div>
<svg style="left:839px;top:421px;" width="14" height="9" viewBox="0 0 14 9"><polygon points="0,9 14,9 7,0" fill="#dde3e6"/></svg>
<svg style="left:864px;top:416px;" width="24" height="20" viewBox="0 0 24 20"><defs><linearGradient id="fg" x1="0" y1="0" x2="0" y2="1"><stop offset="0" stop-color="#8a979c"/><stop offset="1" stop-color="#56666c"/></linearGradient></defs><polygon points="0,1 20,1 12,9 12,17 8,17 8,9" fill="url(#fg)"/><polygon points="17,12 22,16 17,20" fill="#46555b"/></svg>
<svg style="left:1127px;top:416px;" width="24" height="20" viewBox="0 0 24 20"><defs><linearGradient id="fg" x1="0" y1="0" x2="0" y2="1"><stop offset="0" stop-color="#8a979c"/><stop offset="1" stop-color="#56666c"/></linearGradient></defs><polygon points="0,1 20,1 12,9 12,17 8,17 8,9" fill="url(#fg)"/><polygon points="17,12 22,16 17,20" fill="#46555b"/></svg>
<svg style="left:1386px;top:416px;" width="24" height="20" viewBox="0 0 24 20"><defs><linearGradient id="fg" x1="0" y1="0" x2="0" y2="1"><stop offset="0" stop-color="#8a979c"/><stop offset="1" stop-color="#56666c"/></linearGradient></defs><polygon points="0,1 20,1 12,9 12,17 8,17 8,9" fill="url(#fg)"/><polygon points="17,12 22,16 17,20" fill="#46555b"/></svg>
<svg style="left:1627px;top:416px;" width="24" height="20" viewBox="0 0 24 20"><defs><linearGradient id="fg" x1="0" y1="0" x2="0" y2="1"><stop offset="0" stop-color="#8a979c"/><stop offset="1" stop-color="#56666c"/></linearGradient></defs><polygon points="0,1 20,1 12,9 12,17 8,17 8,9" fill="url(#fg)"/><polygon points="17,12 22,16 17,20" fill="#46555b"/></svg>
<div class="t" style="left:1598.6px;top:427.4px;font-size:22px;color:#8f9ca2;transform:scaleX(0.8083);transform-origin:left center;">Σ</div>
<div style="left:472px;top:470px;width:18px;height:17px;border:1.5px solid #777;border-radius:3px;background:linear-gradient(#fff,#dcdcdc)"></div>
<div style="left:476px;top:477.5px;width:10px;height:2px;background:#111"></div>
<div class="t" style="left:516.6px;top:478.7px;font-size:24px;color:#000;font-weight:700;transform:scaleX(1.0022);transform-origin:left center;">Candidate (5 items) Budget Effort Sum = 905,00</div>
<div style="left:496px;top:499px;width:1398px;height:2px;background:#c9d1e3"></div>
<div style="left:498px;top:585px;width:1174px;height:80px;background:#d2d6da"></div>
<div class="t" style="left:569px;top:543.3px;font-size:24px;color:#000;transform:scaleX(1.0010);transform-origin:left center;">Belgium - Production</div>
<div style="left:919.5px;top:523px;width:32px;height:32px;background:#28246e;border-radius:6px;box-shadow:1.5px 1.5px 1.5px rgba(0,0,0,0.45)"></div>
<div class="t" style="left:963.75px;top:539.7px;font-size:24px;color:#2a2a2a;transform:scaleX(0.9505);transform-origin:left center;">2018</div>
<div style="left:1183px;top:523px;width:32px;height:32px;background:#3333ff;border-radius:6px;box-shadow:1.5px 1.5px 1.5px rgba(0,0,0,0.45)"></div>
<div class="t" style="left:1227.5px;top:539.7px;font-size:24px;color:#2a2a2a;transform:scaleX(0.9900);transform-origin:left center;">Cyclical Audit</div>
<div class="t" style="left:1592.09375px;top:533.7px;font-size:24px;color:#2a2a2a;transform:scaleX(0.9264);transform-origin:right center;">150,00</div>
<div class="t" style="left:569px;top:623.3px;font-size:24px;color:#000;transform:scaleX(0.9850);transform-origin:left center;">Belgium - Selling</div>
<div style="left:919.5px;top:603px;width:32px;height:32px;background:#28246e;border-radius:6px;box-shadow:1.5px 1.5px 1.5px rgba(0,0,0,0.45)"></div>
<div class="t" style="left:963.75px;top:619.7px;font-size:24px;color:#2a2a2a;transform:scaleX(0.9505);transform-origin:left center;">2018</div>
<div style="left:1183px;top:603px;width:32px;height:32px;background:#3333ff;border-radius:6px;box-shadow:1.5px 1.5px 1.5px rgba(0,0,0,0.45)"></div>
<div class="t" style="left:1227.5px;top:619.7px;font-size:24px;color:#2a2a2a;transform:scaleX(0.9900);transform-origin:left center;">Cyclical Audit</div>
<div class="t" style="left:1592.09375px;top:613.7px;font-size:24px;color:#2a2a2a;transform:scaleX(0.9264);transform-origin:right center;">260,00</div>
<div class="t" style="left:569px;top:703.3px;font-size:24px;color:#000;transform:scaleX(0.9669);transform-origin:left center;">Headquarters - ICT</div>
<div style="left:919.5px;top:683px;width:32px;height:32px;background:#28246e;border-radius:6px;box-shadow:1.5px 1.5px 1.5px rgba(0,0,0,0.45)"></div>
<div class="t" style="left:963.75px;top:699.7px;font-size:24px;color:#2a2a2a;transform:scaleX(0.9505);transform-origin:left center;">2018</div>
<div style="left:1183px;top:683px;width:32px;height:32px;background:#3333ff;border-radius:6px;box-shadow:1.5px 1.5px 1.5px rgba(0,0,0,0.45)"></div>
<div class="t" style="left:1227.5px;top:699.7px;font-size:24px;color:#2a2a2a;transform:scaleX(0.9900);transform-origin:left center;">Cyclical Audit</div>
<div class="t" style="left:569px;top:783.3px;font-size:24px;color:#000;transform:scaleX(0.9992);transform-origin:left center;">Inventory - Belgium</div>
<div style="left:919.5px;top:763px;width:32px;height:32px;background:#28246e;border-radius:6px;box-shadow:1.5px 1.5px 1.5px rgba(0,0,0,0.45)"></div>
<div class="t" style="left:963.75px;top:779.7px;font-size:24px;color:#2a2a2a;transform:scaleX(0.9505);transform-origin:left center;">2018</div>
<div style="left:1183px;top:763px;width:32px;height:32px;background:#3333ff;border-radius:6px;box-shadow:1.5px 1.5px 1.5px rgba(0,0,0,0.45)"></div>
<div class="t" style="left:1227.5px;top:779.7px;font-size:24px;color:#2a2a2a;transform:scaleX(0.9900);transform-origin:left center;">Cyclical Audit</div>
<div class="t" style="left:569px;top:863.3px;font-size:24px;color:#000;transform:scaleX(1.0049);transform-origin:left center;">Luxembourg - Production</div>
<div style="left:919.5px;top:843px;width:32px;height:32px;background:#28246e;border-radius:6px;box-shadow:1.5px 1.5px 1.5px rgba(0,0,0,0.45)"></div>
<div class="t" style="left:963.75px;top:859.7px;font-size:24px;color:#2a2a2a;transform:scaleX(0.9505);transform-origin:left center;">2018</div>
<div style="left:1183px;top:843px;width:32px;height:32px;background:#3333ff;border-radius:6px;box-shadow:1.5px 1.5px 1.5px rgba(0,0,0,0.45)"></div>
<div class="t" style="left:1227.5px;top:859.7px;font-size:24px;color:#2a2a2a;transform:scaleX(0.9900);transform-origin:left center;">Cyclical Audit</div>
<div style="left:498px;top:905px;width:1396px;height:2px;background:#c3c7cb"></div>
<div style="left:498px;top:907px;width:1396px;height:84px;background:linear-gradient(#ebecee, #fff 45%)"></div>
<div style="left:498px;top:991px;width:1396px;height:2px;background:#c3c7cb"></div>
<div class="t" style="left:1521px;top:927.7px;font-size:24px;color:#000;transform:scaleX(0.9117);transform-origin:left center;">Sum</div>
<div style="left:472px;top:1009px;width:18px;height:17px;border:1.5px solid #777;border-radius:3px;background:linear-gradient(#fff,#dcdcdc)"></div>
<div style="left:476px;top:1016.5px;width:10px;height:2px;background:#111"></div>
<div class="t" style="left:516px;top:1016.9px;font-size:24px;color:#000;font-weight:700;transform:scaleX(1.0057);transform-origin:left center;">Confirmed (5 items) Budget Effort Sum = 2.285,00</div>
<div style="left:496px;top:1038px;width:1398px;height:2px;background:#c9d1e3"></div>
<div class="clip" style="left:462px;top:1040px;width:1432px;height:45.5px">
<div class="t" style="left:107px;top:40.7px;font-size:24px;color:#000;transform:scaleX(0.9717);transform-origin:left center;">Finance - Headquarters</div>
<div style="left:457.5px;top:22px;width:32px;height:32px;background:#28246e;border-radius:6px;box-shadow:1.5px 1.5px 1.5px rgba(0,0,0,0.45)"></div>
<div class="t" style="left:501.75px;top:38.7px;font-size:24px;color:#2a2a2a;transform:scaleX(0.9505);transform-origin:left center;">2018</div>
<div style="left:721px;top:22px;width:32px;height:32px;background:#3333ff;border-radius:6px;box-shadow:1.5px 1.5px 1.5px rgba(0,0,0,0.45)"></div>
<div class="t" style="left:765.5px;top:38.7px;font-size:24px;color:#2a2a2a;transform:scaleX(0.9900);transform-origin:left center;">Cyclical Audit</div>
<div class="t" style="left:1116.634375px;top:32.1px;font-size:24px;color:#2a2a2a;transform:scaleX(0.9382);transform-origin:right center;">1375,00</div>
<svg style="left:46px;top:16.5px;" width="50" height="50"><use href="#bcase" width="50" height="50"/></svg>
</div>
<div style="left:462px;top:1090px;width:1432px;height:2px;background:#c3c7cb"></div>
<div style="left:462px;top:1092px;width:1432px;height:87px;background:linear-gradient(#ebecee, #fff 55%)"></div>
<div class="t" style="left:1495.275px;top:1112.5px;font-size:24px;color:#000;transform:scaleX(0.9616);transform-origin:right center;">Sum = 3.190,00</div>
<div style="left:2px;top:1196px;width:1996px;height:2px;background:#8d9ba3"></div>
<div style="left:2px;top:1198px;width:1996px;height:50px;background:#f2f3f5"></div>
<div class="t" style="left:1621.6px;top:1222.3px;font-size:24px;color:#111;transform:scaleX(0.9024);transform-origin:left center;">100%</div>
<div style="left:1683px;top:1202px;width:2px;height:39px;background:#dcdee0"></div>
<div style="left:1691px;top:1216px;width:240px;height:4px;background:#333"></div>
<div style="left:1769px;top:1209px;width:8px;height:17px;background:#333;outline:1px solid #e0e0e0"></div>
<div style="left:1695px;top:1228px;width:2px;height:8px;background:#222"></div>
<div style="left:1772px;top:1228px;width:2px;height:8px;background:#222"></div>
<div style="left:1848px;top:1228px;width:2px;height:8px;background:#222"></div>
<div style="left:1925px;top:1228px;width:2px;height:8px;background:#222"></div>
<svg style="left:1980px;top:1230px;" width="16" height="16" viewBox="0 0 16 16"><rect x="12" y="0" width="3" height="3" fill="#c8cbce"/><rect x="6" y="6" width="3" height="3" fill="#c8cbce"/><rect x="12" y="6" width="3" height="3" fill="#c8cbce"/><rect x="0" y="12" width="3" height="3" fill="#c8cbce"/><rect x="6" y="12" width="3" height="3" fill="#c8cbce"/><rect x="12" y="12" width="3" height="3" fill="#c8cbce"/></svg>
<div style="left:0px;top:0px;width:2000px;height:2px;background:#8d9ba3"></div>
<div style="left:0px;top:0px;width:2px;height:1250px;background:#8d9ba3"></div>
<div style="left:1998px;top:0px;width:2px;height:1250px;background:#8d9ba3"></div>
<div style="left:0px;top:1248px;width:2000px;height:2px;background:#8d9ba3"></div>
<div style="left:1568px;top:655px;width:392px;height:373px;background:#fff;border:2px solid #9ba6ad;box-shadow:6px 6px 6px rgba(50,60,70,0.55)"></div>
<div style="left:1570px;top:879px;width:387px;height:48px;background:#c9ebe6"></div>
<div style="left:1630px;top:816px;width:326px;height:2px;background:#a9b4ba"></div>
<svg style="left:1583px;top:665px;opacity:0.5;filter:saturate(0.7);" width="28" height="30"><use href="#orbAdd" width="28" height="30"/></svg>
<svg style="left:1584.5px;top:715px;opacity:0.5;filter:saturate(0.7);" width="26" height="30"><use href="#del" width="26" height="30"/></svg>
<svg style="left:1585px;top:762px;opacity:0.5;filter:saturate(0.7);" width="28" height="32"><use href="#view" width="28" height="32"/></svg>
<svg style="left:1582px;top:841px;opacity:0.5;filter:saturate(0.6);" width="32" height="28"><use href="#scope" width="32" height="28"/></svg>
<svg style="left:1582px;top:886px;opacity:0.5;filter:saturate(0.9) brightness(1.1);" width="32" height="32"><use href="#bcaseRed" width="32" height="32"/></svg>
<svg style="left:1582px;top:935px;opacity:0.5;filter:grayscale(1) brightness(1.5);" width="32" height="32"><use href="#bcaseRed" width="32" height="32"/></svg>
<svg style="left:1582px;top:985px;opacity:0.5;filter:saturate(0.7);" width="32" height="32"><use href="#bcase" width="32" height="32"/></svg>
<svg style="left:1583px;top:950px;opacity:0.6;filter:grayscale(1);" width="17" height="17"><use href="#xOrb" width="17" height="17"/></svg>
<svg style="left:1583px;top:1000px;opacity:0.5;" width="17" height="17"><use href="#downOrb" width="17" height="17"/></svg>
<div class="t" style="left:1626.8px;top:681.7px;font-size:24px;color:#1e1e1e;transform:scaleX(1.0044);transform-origin:left center;">Add Candidate Audit</div>
<div class="t" style="left:1626.8px;top:730.1px;font-size:24px;color:#1e1e1e;transform:scaleX(0.9658);transform-origin:left center;">Delete</div>
<div class="t" style="left:1626.8px;top:779.4px;font-size:24px;color:#1e1e1e;transform:scaleX(0.9691);transform-origin:left center;">View</div>
<div class="t" style="left:1626.8px;top:854.0px;font-size:24px;color:#1e1e1e;transform:scaleX(0.9391);transform-origin:left center;">Set Scope</div>
<div class="t" style="left:1626.8px;top:902.7px;font-size:24px;color:#1e1e1e;transform:scaleX(1.0090);transform-origin:left center;">Confirm Candidate Audit</div>
<div class="t" style="left:1626.8px;top:952.4px;font-size:24px;color:#8e8e8e;transform:scaleX(1.0008);transform-origin:left center;">Remove Confirmed Audit</div>
<div class="t" style="left:1626.8px;top:1001.1px;font-size:24px;color:#1e1e1e;transform:scaleX(0.9875);transform-origin:left center;">Get Prior Candidate Audits</div>
<svg style="left:1909px;top:912px;" width="26" height="40" viewBox="0 0 26 40"><path d="M1,0.5 L1,30.5 L8,24 L14.5,37.5 L18.8,35.8 L12.8,22.8 L22.6,22.8 Z" fill="#000" stroke="#fff" stroke-width="1.2" stroke-linejoin="miter"/></svg>
<svg style="left:14.7px;top:144.4px;" width="60" height="64"><use href="#orbAdd" width="60" height="64"/></svg>
<svg style="left:91.5px;top:143.5px;opacity:0.85;" width="60" height="64"><use href="#orbLink" width="60" height="64"/></svg>
<svg style="left:294.8px;top:143.9px;" width="60" height="64"><use href="#orbRefresh" width="60" height="64"/></svg>
<svg style="left:169.5px;top:145px;" width="26" height="30"><use href="#del" width="26" height="30"/></svg>
<svg style="left:169.5px;top:189px;" width="28" height="32"><use href="#view" width="28" height="32"/></svg>
<svg style="left:167px;top:234px;opacity:0.8;" width="30" height="32"><use href="#email" width="30" height="32"/></svg>
<svg style="left:375px;top:145px;opacity:0.7;" width="32" height="32"><use href="#save" width="32" height="32"/></svg>
<svg style="left:378px;top:189px;opacity:0.8;" width="28" height="32"><use href="#cancel" width="28" height="32"/></svg>
<svg style="left:375px;top:237px;opacity:0.8;" width="34" height="22"><use href="#unlock" width="34" height="22"/></svg>
<svg style="left:515px;top:144px;opacity:0.9;" width="52" height="62"><use href="#launch" width="52" height="62"/></svg>
<svg style="left:589px;top:145px;opacity:0.8;" width="30" height="32"><use href="#back" width="30" height="32"/></svg>
<svg style="left:591px;top:189px;opacity:0.8;" width="28" height="32"><use href="#attach" width="28" height="32"/></svg>
<svg style="left:591px;top:234px;opacity:0.8;" width="28" height="32"><use href="#detach" width="28" height="32"/></svg>
<svg style="left:725px;top:143px;opacity:0.85;" width="60" height="64"><use href="#paste" width="60" height="64"/></svg>
<svg style="left:799px;top:147px;opacity:0.8;" width="34" height="24"><use href="#cut" width="34" height="24"/></svg>
<svg style="left:799px;top:188px;opacity:0.8;" width="34" height="34"><use href="#copy" width="34" height="34"/></svg>
<svg style="left:943px;top:152px;" width="64" height="56"><use href="#scope" width="64" height="56"/></svg>
<svg style="left:1073.3px;top:142.3px;" width="68" height="68"><use href="#bcaseRed" width="68" height="68"/></svg>
<svg style="left:1261px;top:142.4px;opacity:0.4;" width="65" height="65"><use href="#bcaseRed" width="65" height="65"/></svg>
<svg style="left:1262px;top:172px;opacity:0.8;" width="33" height="33"><use href="#xOrb" width="33" height="33"/></svg>
<svg style="left:1449.7px;top:142.7px;" width="69" height="69"><use href="#bcase" width="69" height="69"/></svg>
<svg style="left:1450px;top:169px;" width="37" height="37"><use href="#downOrb" width="37" height="37"/></svg>
<svg style="left:508px;top:518px;" width="50" height="50"><use href="#bcase" width="50" height="50"/></svg>
<svg style="left:508px;top:598px;" width="50" height="50"><use href="#bcase" width="50" height="50"/></svg>
<svg style="left:508px;top:678px;" width="50" height="50"><use href="#bcase" width="50" height="50"/></svg>
<svg style="left:508px;top:758px;" width="50" height="50"><use href="#bcase" width="50" height="50"/></svg>
<svg style="left:508px;top:838px;" width="50" height="50"><use href="#bcase" width="50" height="50"/></svg>
<svg style="left:17px;top:324px;" width="42" height="48"><use href="#book" width="42" height="48"/></svg>
<svg style="left:56px;top:550px;" width="40" height="52"><use href="#pra" width="40" height="52"/></svg>
<svg style="left:51px;top:649px;" width="50" height="46"><use href="#pre" width="50" height="46"/></svg>
<svg style="left:51px;top:812px;" width="50" height="46"><use href="#asched" width="50" height="46"/></svg>
<svg style="left:49.8px;top:896.6px;" width="55" height="55"><use href="#bcase" width="55" height="55"/></svg>
<svg style="left:78px;top:1141px;" width="44" height="46"><use href="#atom" width="44" height="46"/></svg>
<svg style="left:145px;top:1139px;" width="42" height="48"><use href="#book" width="42" height="48"/></svg>
<svg style="left:205px;top:1141px;" width="46" height="40"><use href="#abacus" width="46" height="40"/></svg>
<svg style="left:272px;top:1140px;" width="38" height="48"><use href="#person" width="38" height="48"/></svg></body></html>
